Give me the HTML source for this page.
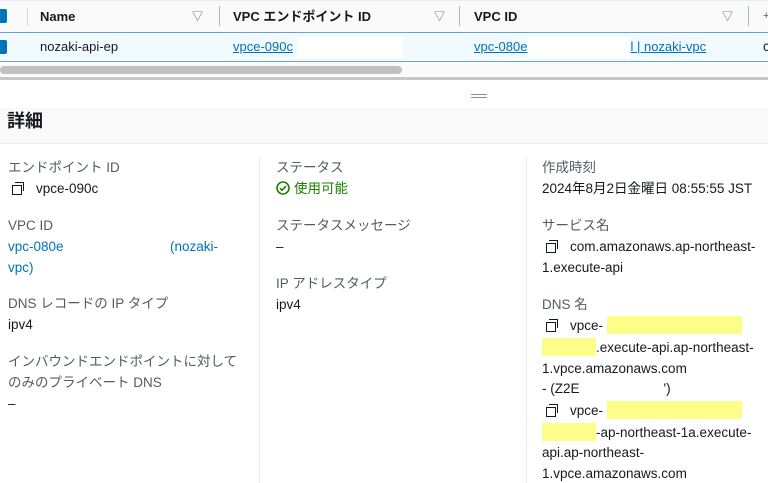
<!DOCTYPE html>
<html><head><meta charset="utf-8"><style>
*{margin:0;padding:0;box-sizing:border-box}
body{width:768px;height:483px;overflow:hidden;background:#fff;font-family:"Liberation Sans","Noto Sans CJK JP",sans-serif;color:#16191f;position:relative;font-size:13.5px}
.a{position:absolute;white-space:nowrap;line-height:16px}
.lbl{color:#545b64;font-size:13.5px}
.v{font-size:13.5px;color:#16191f}
.lk{color:#0073bb}
.cp{display:inline-block;width:12px;height:12px;position:relative;vertical-align:-1px;margin-right:12px}
.cp:before{content:"";position:absolute;left:0;top:3px;width:8px;height:8px;border:1.5px solid #16191f}
.cp:after{content:"";position:absolute;left:3px;top:0;width:8px;height:8px;border:1.5px solid #16191f;border-left:none;border-bottom:none}
.y{position:absolute;background:#fdfd8a}
</style></head><body>
<div class="a" style="left:0;top:0;width:768px;height:33px;background:#fafafa;border-top:1px solid #eaeded"></div>
<div class="a" style="left:0;top:9px;width:7px;height:14px;background:#0073bb;border-radius:0 2px 2px 0"></div>
<div class="a" style="left:27px;top:8px;width:1px;height:18px;background:#d5dbdb"></div>
<div class="a" style="left:40px;top:9px;font-weight:bold;font-size:13px">Name</div>
<div class="a" style="left:192px;top:9px;font-size:11px;color:#545b64">▽</div>
<div class="a" style="left:219px;top:6px;width:1px;height:20px;background:#aab7b8"></div>
<div class="a" style="left:233px;top:9px;font-weight:bold;font-size:13px">VPC エンドポイント ID</div>
<div class="a" style="left:434px;top:9px;font-size:11px;color:#545b64">▽</div>
<div class="a" style="left:459px;top:6px;width:1px;height:20px;background:#aab7b8"></div>
<div class="a" style="left:474px;top:9px;font-weight:bold;font-size:13px">VPC ID</div>
<div class="a" style="left:722px;top:9px;font-size:11px;color:#545b64">▽</div>
<div class="a" style="left:748px;top:6px;width:1px;height:20px;background:#aab7b8"></div>
<div class="a" style="left:763px;top:8px;font-size:11px;color:#545b64">+</div>
<div class="a" style="left:0;top:32px;width:768px;height:30px;background:#f1faff;border-top:1px solid #6fa3cf;border-bottom:1px solid #6fa3cf"></div>
<div class="a" style="left:0;top:40px;width:7px;height:14px;background:#0073bb;border-radius:0 2px 2px 0"></div>
<div class="a" style="left:40px;top:39px;font-size:13px">nozaki-api-ep</div>
<div class="a lk" style="left:233px;top:39px;text-decoration:underline;font-size:13px">vpce-090c</div>
<div class="a" style="left:298px;top:37px;width:105px;height:21px;background:#fff"></div>
<div class="a lk" style="left:474px;top:39px;text-decoration:underline;font-size:13px">vpc-080e<span style="display:inline-block;width:103px"></span>l | nozaki-vpc</div>
<div class="a" style="left:528px;top:37px;width:102px;height:21px;background:#fff"></div>
<div class="a" style="left:763px;top:39px">c</div>
<div class="a" style="left:0;top:62px;width:768px;height:14px;background:#fafafa"></div>
<div class="a" style="left:0;top:66px;width:402px;height:8px;background:#c1c1c1;border-radius:4px"></div>
<div class="a" style="left:0;top:77px;width:768px;height:3px;background:#c6c6c6"></div>
<div class="a" style="left:471px;top:94px;width:16px;height:1px;background:#879596"></div>
<div class="a" style="left:471px;top:97px;width:16px;height:1px;background:#879596"></div>
<div class="a" style="left:0;top:108px;width:768px;height:36px;background:#fafafa;border-bottom:1px solid #eaeded"></div>
<div class="a" style="left:7px;top:111px;font-size:18px;font-weight:bold;line-height:20px">詳細</div>
<div class="a" style="left:259px;top:157px;width:1px;height:326px;background:#eaeded"></div>
<div class="a" style="left:526px;top:157px;width:1px;height:326px;background:#eaeded"></div>
<div class="a lbl" style="left:8px;top:160px">エンドポイント ID</div>
<div class="a v" style="left:12px;top:181px"><span class="cp"></span>vpce-090c</div>
<div class="a lbl" style="left:8px;top:218px">VPC ID</div>
<div class="a lk" style="left:8px;top:239px">vpc-080e</div>
<div class="a lk" style="left:170px;top:239px">(nozaki-</div>
<div class="a lk" style="left:8px;top:260px">vpc)</div>
<div class="a lbl" style="left:8px;top:296px">DNS レコードの IP タイプ</div>
<div class="a v" style="left:8px;top:317px">ipv4</div>
<div class="a lbl" style="left:8px;top:354px">インバウンドエンドポイントに対して</div>
<div class="a lbl" style="left:8px;top:375px">のみのプライベート DNS</div>
<div class="a v" style="left:8px;top:396px">–</div>
<div class="a lbl" style="left:276px;top:160px">ステータス</div>
<div class="a" style="left:276px;top:181px;color:#1d8102"><svg width="14" height="14" viewBox="0 0 14 14" style="vertical-align:-2px;margin-right:4px"><circle cx="7" cy="7" r="6" fill="none" stroke="#1d8102" stroke-width="1.6"/><path d="M4 7.2l2 2 4-4" fill="none" stroke="#1d8102" stroke-width="1.6"/></svg>使用可能</div>
<div class="a lbl" style="left:276px;top:218px">ステータスメッセージ</div>
<div class="a v" style="left:276px;top:239px">–</div>
<div class="a lbl" style="left:276px;top:276px">IP アドレスタイプ</div>
<div class="a v" style="left:276px;top:297px">ipv4</div>
<div class="a lbl" style="left:542px;top:160px">作成時刻</div>
<div class="a v" style="left:542px;top:181px">2024年8月2日金曜日 08:55:55 JST</div>
<div class="a lbl" style="left:542px;top:218px">サービス名</div>
<div class="a v" style="left:546px;top:239px"><span class="cp"></span>com.amazonaws.ap-northeast-</div>
<div class="a v" style="left:542px;top:260px">1.execute-api</div>
<div class="a lbl" style="left:542px;top:297px">DNS 名</div>
<div class="y" style="left:607px;top:316px;width:135px;height:18px"></div>
<div class="a v" style="left:546px;top:318px"><span class="cp"></span>vpce-</div>
<div class="y" style="left:542px;top:338px;width:54px;height:18px"></div>
<div class="a v" style="left:596px;top:340px">.execute-api.ap-northeast-</div>
<div class="a v" style="left:542px;top:361px">1.vpce.amazonaws.com</div>
<div class="a v" style="left:542px;top:381px">- (Z2E<span style="display:inline-block;width:84px"></span>')</div>
<div class="y" style="left:607px;top:401px;width:135px;height:18px"></div>
<div class="a v" style="left:546px;top:403px"><span class="cp"></span>vpce-</div>
<div class="y" style="left:542px;top:423px;width:54px;height:18px"></div>
<div class="a v" style="left:596px;top:425px">-ap-northeast-1a.execute-</div>
<div class="a v" style="left:542px;top:445px">api.ap-northeast-</div>
<div class="a v" style="left:542px;top:466px">1.vpce.amazonaws.com</div>
</body></html>
